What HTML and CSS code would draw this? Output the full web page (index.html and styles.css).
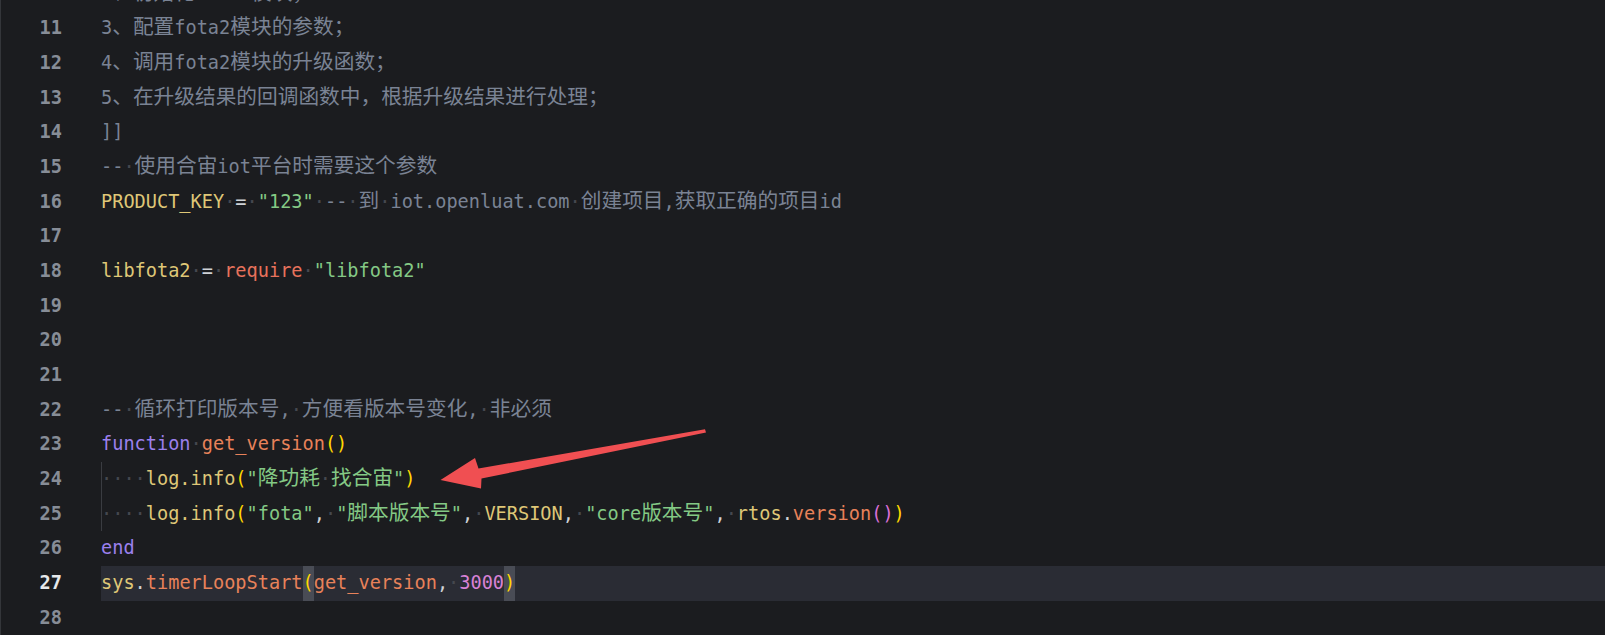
FILE: index.html
```html
<!DOCTYPE html>
<html lang="zh-CN">
<head>
<meta charset="utf-8">
<title>main.lua</title>
<link rel="stylesheet" href="styles.css">
</head>
<body>
<div class="editor">
  <div class="lines">
    <div class="line"><span class="ln">10</span><span class="code"><span class="c">2<span class="zh">、初始化</span>fota2<span class="zh">模块；</span></span></span></div>
    <div class="line"><span class="ln">11</span><span class="code"><span class="c">3<span class="zh">、配置</span>fota2<span class="zh">模块的参数；</span></span></span></div>
    <div class="line"><span class="ln">12</span><span class="code"><span class="c">4<span class="zh">、调用</span>fota2<span class="zh">模块的升级函数；</span></span></span></div>
    <div class="line"><span class="ln">13</span><span class="code"><span class="c">5<span class="zh">、在升级结果的回调函数中，根据升级结果进行处理；</span></span></span></div>
    <div class="line"><span class="ln">14</span><span class="code"><span class="c">]]</span></span></div>
    <div class="line"><span class="ln">15</span><span class="code"><span class="c">--<span class="sp">·</span><span class="zh">使用合宙</span>iot<span class="zh">平台时需要这个参数</span></span></span></div>
    <div class="line"><span class="ln">16</span><span class="code"><span class="y">PRODUCT_KEY</span><span class="sp">·</span><span class="p">=</span><span class="sp">·</span><span class="s">"123"</span><span class="sp">·</span><span class="c">--</span><span class="sp">·</span><span class="c zh">到</span><span class="sp">·</span><span class="c">iot.openluat.com</span><span class="sp">·</span><span class="c"><span class="zh">创建项目</span>,<span class="zh">获取正确的项目</span>id</span></span></div>
    <div class="line"><span class="ln">17</span><span class="code"></span></div>
    <div class="line"><span class="ln">18</span><span class="code"><span class="y">libfota2</span><span class="sp">·</span><span class="p">=</span><span class="sp">·</span><span class="r">require</span><span class="sp">·</span><span class="s">"libfota2"</span></span></div>
    <div class="line"><span class="ln">19</span><span class="code"></span></div>
    <div class="line"><span class="ln">20</span><span class="code"></span></div>
    <div class="line"><span class="ln">21</span><span class="code"></span></div>
    <div class="line"><span class="ln">22</span><span class="code"><span class="c">--<span class="sp">·</span><span class="zh">循环打印版本号</span>,<span class="sp">·</span><span class="zh">方便看版本号变化</span>,<span class="sp">·</span><span class="zh">非必须</span></span></span></div>
    <div class="line"><span class="ln">23</span><span class="code"><span class="k">function</span><span class="sp">·</span><span class="f">get_version</span><span class="b1">()</span></span></div>
    <div class="line"><span class="ln">24</span><span class="code guide"><span class="sp">····</span><span class="y">log.info</span><span class="b1">(</span><span class="s">"<span class="zh">降功耗</span><span class="sp">·</span><span class="zh">找合宙</span>"</span><span class="b1">)</span></span></div>
    <div class="line"><span class="ln">25</span><span class="code guide"><span class="sp">····</span><span class="y">log.info</span><span class="b1">(</span><span class="s">"fota"</span><span class="p">,</span><span class="sp">·</span><span class="s">"<span class="zh">脚本版本号</span>"</span><span class="p">,</span><span class="sp">·</span><span class="y">VERSION</span><span class="p">,</span><span class="sp">·</span><span class="s">"core<span class="zh">版本号</span>"</span><span class="p">,</span><span class="sp">·</span><span class="y">rtos</span><span class="p">.</span><span class="f">version</span><span class="b2">()</span><span class="b1">)</span></span></div>
    <div class="line"><span class="ln">26</span><span class="code"><span class="k">end</span></span></div>
    <div class="line current"><span class="ln">27</span><span class="code"><span class="y">sys</span><span class="p">.</span><span class="f">timerLoopStart</span><span class="b1 bm">(</span><span class="f">get_version</span><span class="p">,</span><span class="sp">·</span><span class="n">3000</span><span class="b1 bm">)</span></span></div>
    <div class="line"><span class="ln">28</span><span class="code"></span></div>
  </div>
  <svg class="arrow" width="1605" height="635" viewBox="0 0 1605 635" aria-hidden="true">
    <polygon points="440.5,480 475,458 478.5,468.5 705,429.2 706,432.6 481.5,478.5 481,488.5" fill="#f04f52"/>
  </svg>
</div>
</body>
</html>
```

FILE: styles.css
```css
html, body {
  margin: 0;
  padding: 0;
  background: #1b1c1f;
}

.editor {
  position: relative;
  width: 1605px;
  height: 635px;
  overflow: hidden;
  background: #1b1c1f;
  border-left: 1px solid #34363a;
  box-sizing: border-box;
  font-family: "DejaVu Sans Mono", "Liberation Mono", "Noto Sans CJK SC", monospace;
  font-size: 18.6px;
  color: #d4d4d4;
}

.lines {
  display: flex;
  flex-direction: column;
  margin-top: -23.3px;
}

.line {
  display: flex;
  height: 34.67px;
  line-height: 34.67px;
  white-space: pre;
}

.ln {
  flex: 0 0 100px;
  box-sizing: border-box;
  padding-right: 39px;
  text-align: right;
  color: #878d97;
  font-weight: bold;
}

.current .ln {
  color: #e6e8ea;
}

.code {
  flex: 1;
  min-width: 0;
}

.current .code {
  background: #2a2c34;
}

.guide {
  box-shadow: inset 1px 0 0 #3a3c41;
}

.zh {
  font-family: "Noto Sans CJK SC", sans-serif;
  font-size: 20.7px;
  line-height: 1;
}

.c { color: #7a8394; }
.sp { color: #45484f; }
.p { color: #cfd2d6; }
.y { color: #dfc777; }
.s { color: #84c985; }
.r { color: #e8725c; }
.k { color: #9b80ee; }
.f { color: #e8825a; }
.n { color: #d882d6; }
.b1 { color: #ffd700; }
.b2 { color: #da70d6; }

.bm {
  display: inline-block;
  height: 34.67px;
  vertical-align: top;
  background: #494c55;
}

.arrow {
  position: absolute;
  left: -1px;
  top: 0;
}
```
